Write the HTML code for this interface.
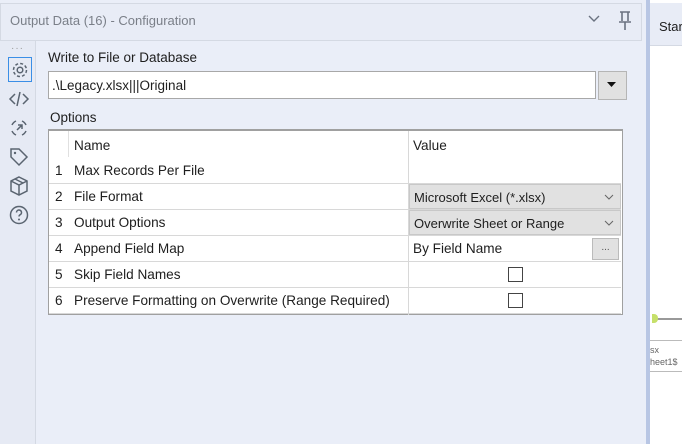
<!DOCTYPE html>
<html><head><style>
*{margin:0;padding:0;box-sizing:border-box}
body{width:682px;height:444px;overflow:hidden;background:#eaeef8;font-family:"Liberation Sans",sans-serif;font-size:13px;color:#1e1e1e;position:relative}
.a{position:absolute}
.hdr{left:0;top:3px;width:642px;height:38px;background:#e8ecf6;border:1px solid #d4d9e3}
.ic{stroke:#5a6470;fill:none;stroke-width:1.5}
.row{position:absolute;left:0;width:572px;height:26px;border-bottom:1px solid #d8d8d8;font-size:13.6px}
.num{position:absolute;left:6px;top:5px}
.nm{position:absolute;left:25px;top:5px}
.dd{position:absolute;left:360px;top:0;width:212px;height:25px;background:#e1e1e1;border:1px solid #c8c8c8;padding:5px 4px;font-size:13px}
.cb{position:absolute;left:459px;top:5px;width:15px;height:15px;border:1px solid #444;background:#fff}
</style></head><body>
<div class="a hdr"></div>
<div class="a" style="left:10px;top:13px;font-size:13px;color:#7a7f88">Output Data (16) - Configuration</div>
<svg class="a" style="left:587px;top:14px" width="14" height="10"><path d="M2 2l5 5 5-5" stroke="#6a7280" stroke-width="1.4" fill="none"/></svg>
<svg class="a" style="left:616px;top:10px" width="18" height="22"><path d="M4 2h10M6 2v9M12 2v9M3 12h12M9 12v8" stroke="#6a7280" stroke-width="1.6" fill="none"/></svg>
<div class="a" style="left:646px;top:0;width:4px;height:444px;background:#b8c6e4"></div>
<div class="a" style="left:650px;top:0;width:32px;height:444px;background:#fff"></div>
<div class="a" style="left:650px;top:3px;width:32px;height:43px;background:#e8ecf6;border-bottom:1px solid #d4d9e3"></div>
<div class="a" style="left:659px;top:19px;font-size:13px">Star</div>
<div class="a" style="left:652px;top:318px;width:30px;height:2px;background:#999"></div>
<div class="a" style="left:652px;top:314px;width:6px;height:9px;background:#c6e06a;border-radius:0 4px 4px 0"></div>
<div class="a" style="left:650px;top:340px;width:32px;height:1px;background:#bbb"></div>
<div class="a" style="left:650px;top:371px;width:32px;height:1px;background:#bbb"></div>
<div class="a" style="left:650px;top:344px;font-size:9px;color:#666;line-height:12px">sx<br>heet1$</div>
<div class="a" style="left:0;top:41px;width:36px;height:403px;background:#e6eaf4;border-right:1px solid #d4d9e3"></div>
<div class="a" style="left:11px;top:43px;font-size:10px;color:#999;letter-spacing:1px">···</div>
<div class="a" style="left:8px;top:57px;width:24px;height:25px;border:1px solid #3a8ee6"></div>
<svg class="a" style="left:9px;top:59px" width="22" height="22"><circle cx="11" cy="11" r="2.8" class="ic"/><circle cx="11" cy="11" r="6.5" class="ic" stroke-dasharray="3 2.1"/></svg>
<svg class="a" style="left:8px;top:89px" width="22" height="20"><path class="ic" d="M7 5l-5 5 5 5M15 5l5 5-5 5M12 3l-3 14"/></svg>
<svg class="a" style="left:8px;top:117px" width="22" height="22"><path class="ic" d="M4 8a8 8 0 0 1 4-4M14 4a8 8 0 0 1 4 4M18 14a8 8 0 0 1-4 4M8 18a8 8 0 0 1-4-4M9 13l5-5M10 8h4v4"/></svg>
<svg class="a" style="left:8px;top:146px" width="22" height="22"><path class="ic" d="M3 3h8l8 8-8 8-8-8z"/><circle cx="7" cy="7" r="1.2" fill="#5a6470"/></svg>
<svg class="a" style="left:8px;top:175px" width="22" height="22"><path class="ic" d="M11 2l8 4v10l-8 4-8-4V6zM3 6l8 4 8-4M11 10v10M7 4l8 4"/></svg>
<svg class="a" style="left:8px;top:204px" width="22" height="22"><circle cx="11" cy="11" r="8.5" class="ic"/><path class="ic" d="M8.5 8.5a2.5 2.5 0 1 1 3.5 2.3c-.7.4-1 .9-1 1.7"/><circle cx="11" cy="15.5" r="1" fill="#5a6470"/></svg>
<div class="a" style="left:48px;top:50px;font-size:13.5px">Write to File or Database</div>
<div class="a" style="left:48px;top:71px;width:548px;height:28px;background:#fff;border:1px solid #a8a8a8;padding:6px 3px;font-size:13.5px">.\Legacy.xlsx|||Original</div>
<div class="a" style="left:598px;top:71px;width:29px;height:29px;background:#e1e1e1;border:1px solid #b5b5b5"></div>
<svg class="a" style="left:607px;top:82px" width="10" height="6"><path d="M0 0h9L4.5 5z" fill="#111"/></svg>
<div class="a" style="left:50px;top:110px;font-size:13.5px">Options</div>
<div class="a" style="left:48px;top:129px;width:575px;height:186px;background:#fff;border:1px solid #a0a0a0;border-top:2px solid #a0a0a0">
<div class="a" style="left:19px;top:0;width:1px;height:26px;background:#e0e0e0"></div>
<div class="a" style="left:359px;top:0;width:1px;height:184px;background:#d8d8d8"></div>
<div class="a" style="left:25px;top:7px;font-size:13.6px">Name</div>
<div class="a" style="left:364px;top:7px;font-size:13.6px">Value</div>
<div class="row" style="top:27px"><span class="num">1</span><span class="nm">Max Records Per File</span></div>
<div class="row" style="top:53px"><span class="num">2</span><span class="nm">File Format</span><div class="dd">Microsoft Excel (*.xlsx)<svg style="position:absolute;right:6px;top:9px" width="10" height="6"><path d="M1 1l4 4 4-4" stroke="#666" fill="none"/></svg></div></div>
<div class="row" style="top:79px"><span class="num">3</span><span class="nm">Output Options</span><div class="dd">Overwrite Sheet or Range<svg style="position:absolute;right:6px;top:9px" width="10" height="6"><path d="M1 1l4 4 4-4" stroke="#666" fill="none"/></svg></div></div>
<div class="row" style="top:105px"><span class="num">4</span><span class="nm">Append Field Map</span><span class="a" style="left:364px;top:5px">By Field Name</span><div class="a" style="left:543px;top:2px;width:27px;height:22px;background:#e1e1e1;border:1px solid #bbb;font-size:10px;text-align:center;line-height:18px;color:#555">...</div></div>
<div class="row" style="top:131px"><span class="num">5</span><span class="nm">Skip Field Names</span><div class="cb"></div></div>
<div class="row" style="top:157px"><span class="num">6</span><span class="nm">Preserve Formatting on Overwrite (Range Required)</span><div class="cb"></div></div>
</div>
</body></html>
